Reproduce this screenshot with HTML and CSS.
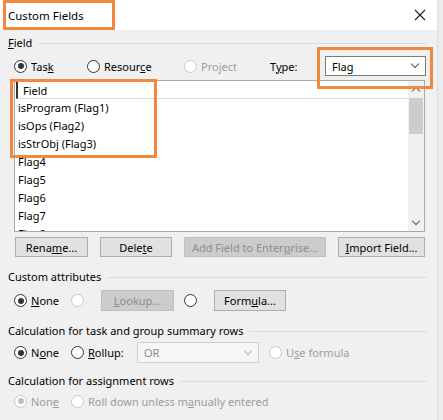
FILE: index.html
```html
<!DOCTYPE html>
<html lang="en">
<head>
  <meta charset="UTF-8" />
  <title>Custom Fields</title>
  <link rel="stylesheet" href="styles.css">
</head>
<body>
<div class="dialog">
  <div class="titlebar">
    <span class="title">Custom Fields</span>
    <svg class="close" width="12" height="12" viewBox="0 0 12 12"><path d="M1 1 L11 11 M11 1 L1 11" stroke="#222" stroke-width="1.2" fill="none"/></svg>
  </div>

  <div class="content">
    <div class="group-head"><span><u>F</u>ield</span></div>
    <div class="row row-type">
      <label class="radio"><span class="dot checked"></span><span>Tas<u>k</u></span></label>
      <label class="radio"><span class="dot"></span><span>Resour<u>c</u>e</span></label>
      <label class="radio disabled"><span class="dot"></span><span>Pro<u>j</u>ect</span></label>
      <span class="type-label">T<u>y</u>pe:</span>
      <div class="select"><span>Flag</span><span class="chev"></span></div>
    </div>

    <div class="listbox">
      <div class="list-main">
        <div class="list-head">Field</div>
        <div class="list-item">isProgram (Flag1)</div>
        <div class="list-item">isOps (Flag2)</div>
        <div class="list-item">isStrObj (Flag3)</div>
        <div class="list-item">Flag4</div>
        <div class="list-item">Flag5</div>
        <div class="list-item">Flag6</div>
        <div class="list-item">Flag7</div>
        <div class="list-item">Flag8</div>
      </div>
      <div class="scrollbar">
        <span class="arrow up"></span>
        <span class="thumb"></span>
        <span class="track"></span>
        <span class="arrow down"></span>
      </div>
    </div>

    <div class="row row-buttons">
      <button class="btn">Rena<u>m</u>e...</button>
      <button class="btn">Dele<u>t</u>e</button>
      <button class="btn" disabled>Add Field to Enter<u>p</u>rise...</button>
      <button class="btn"><u>I</u>mport Field...</button>
    </div>

    <div class="group-head"><span>Custom attributes</span></div>
    <div class="row row-attr">
      <label class="radio"><span class="dot checked"></span><span><u>N</u>one</span></label>
      <label class="radio disabled"><span class="dot"></span></label>
      <button class="btn" disabled><u>L</u>ookup...</button>
      <span></span>
      <label class="radio"><span class="dot"></span></label>
      <button class="btn">Form<u>u</u>la...</button>
    </div>

    <div class="group-head"><span>Calculation for task and group summary rows</span></div>
    <div class="row row-summary">
      <label class="radio"><span class="dot checked"></span><span>N<u>o</u>ne</span></label>
      <label class="radio"><span class="dot"></span><span><u>R</u>ollup:</span></label>
      <div class="select disabled"><span>OR</span><span class="chev"></span></div>
      <span></span>
      <label class="radio disabled"><span class="dot"></span><span>U<u>s</u>e formula</span></label>
    </div>

    <div class="group-head"><span>Calculation for assignment rows</span></div>
    <div class="row row-assign">
      <label class="radio disabled"><span class="dot checked"></span><span>Non<u>e</u></span></label>
      <label class="radio disabled"><span class="dot"></span><span>Roll down unless m<u>a</u>nually entered</span></label>
    </div>
  </div>

  <!-- annotation boxes drawn over the dialog -->
  <div class="mark mark-title"></div>
  <div class="mark mark-type"></div>
  <div class="mark mark-list"></div>
</div>
</body>
</html>
```

FILE: styles.css
```css
body {
  margin: 0;
  background-color: #ececec;
  font-family: "Noto Sans", "Open Sans", sans-serif;
  font-size: 11px;
  color: #000;
}

.dialog {
  position: relative;
  width: 437px;
  height: 420px;
  background-color: #f0f0f0;
  border-right: 1px solid #e0e0e0;
}

.titlebar {
  height: 30px;
  background-color: #fff;
  display: flex;
  align-items: center;
  justify-content: space-between;
  padding: 0 8px;
}

.title {
  font-size: 11.5px;
  padding-top: 1px;
}

.close {
  margin-right: 3px;
}

.content {
  padding: 5px 0 0;
}

.group-head {
  height: 16px;
  line-height: 16px;
  display: flex;
  align-items: center;
  padding-left: 8px;
  padding-right: 10px;
}

.group-head::after {
  content: "";
  flex: 1;
  height: 1px;
  background-color: #dcdcdc;
  margin-left: 6px;
}

.row {
  display: grid;
  align-items: center;
  padding-left: 14px;
}

.radio {
  display: flex;
  align-items: center;
  gap: 4px;
  white-space: nowrap;
}

.dot {
  width: 11px;
  height: 11px;
  border: 1px solid #333;
  border-radius: 50%;
  background-color: #fff;
  position: relative;
  flex: none;
}

.dot.checked::after {
  content: "";
  position: absolute;
  left: 2.5px;
  top: 2.5px;
  width: 6px;
  height: 6px;
  border-radius: 50%;
  background-color: #333;
}

.radio.disabled {
  color: #9d9d9d;
}

.radio.disabled .dot {
  border-color: #c8c8c8;
}

.radio.disabled .dot.checked::after {
  background-color: #c0c0c0;
}

.row-type {
  margin-top: 4px;
  height: 22px;
  grid-template-columns: 73px 97px 86px 55px 101px;
}

.select {
  height: 20px;
  box-sizing: border-box;
  border: 1px solid #7a7a7a;
  background-color: #fff;
  display: flex;
  align-items: center;
  justify-content: space-between;
  padding: 0 7px 0 6px;
}

.chev {
  width: 5px;
  height: 5px;
  border-right: 1px solid #555;
  border-bottom: 1px solid #555;
  transform: rotate(45deg);
  margin-top: -4px;
}

.select.disabled {
  height: 21px;
  border-color: #d0d0d0;
  background-color: #f6f6f6;
  color: #8a8a8a;
}

.select.disabled .chev {
  border-color: #b5b5b5;
}

/* field list */
.listbox {
  margin: 3px 12px 0 14px;
  height: 152px;
  box-sizing: border-box;
  border: 1px solid #a9a9a9;
  background-color: #fff;
  display: grid;
  grid-template-columns: 1fr 16px;
  overflow: hidden;
}

.list-main {
  overflow: hidden;
}

.list-head {
  height: 14px;
  padding: 3px 0 0 5px;
  line-height: 14px;
  border-left: 2px solid #333;
  border-bottom: 1px solid #dadada;
  margin-left: 1px;
}

.list-item {
  height: 18px;
  line-height: 18px;
  padding-left: 3px;
}

.scrollbar {
  background-color: #f0f0f0;
  display: flex;
  flex-direction: column;
}

.arrow {
  height: 17px;
  display: flex;
  justify-content: center;
  align-items: center;
}

.arrow::before {
  content: "";
  width: 5px;
  height: 5px;
  border-left: 1.5px solid #606060;
  border-top: 1.5px solid #606060;
}

.arrow.up::before {
  transform: rotate(45deg);
  margin-top: 3px;
}

.arrow.down::before {
  transform: rotate(225deg);
  margin-top: -3px;
}

.thumb {
  height: 36px;
  margin: 0 1px;
  background-color: #cdcdcd;
}

.track {
  flex: 1;
}

.btn {
  font-family: inherit;
  font-size: 11px;
  height: 20px;
  padding: 0;
  border: 1px solid #adadad;
  background-color: #e1e1e1;
  color: #000;
}

.btn:disabled {
  background-color: #cccccc;
  border-color: #bfbfbf;
  color: #8d8d8d;
}

.row-buttons {
  margin-top: 5px;
  padding-left: 15px;
  grid-template-columns: 73px 72px 142px 87px;
  column-gap: 12px;
}

.group-head + .row {
  margin-top: 5px;
}

.listbox + .row-buttons + .group-head {
  margin-top: 12px;
}

.row-attr {
  height: 21px;
  grid-template-columns: 57px 30px 73px 10px 30px 72px;
}

.row-attr .btn {
  height: 21px;
}

.row-attr + .group-head {
  margin-top: 12px;
}

.row-summary {
  height: 21px;
  grid-template-columns: 57px 66px 122px 10px auto;
}

.group-head + .row-summary {
  margin-top: 3px;
}

.row-summary + .group-head {
  margin-top: 10px;
}

.row-assign {
  height: 20px;
  grid-template-columns: 57px auto;
}

.group-head + .row-assign {
  margin-top: 2px;
}

.group-head + .row-type {
  margin-top: 4px;
}

/* orange highlight boxes */
.mark {
  position: absolute;
  border: 3px solid #f0883e;
  box-sizing: border-box;
}

.mark-title {
  left: 3px;
  top: 0;
  width: 112px;
  height: 30px;
}

.mark-type {
  left: 317px;
  top: 47px;
  width: 116px;
  height: 42px;
}

.mark-list {
  left: 10px;
  top: 79px;
  width: 147px;
  height: 79px;
}
```
